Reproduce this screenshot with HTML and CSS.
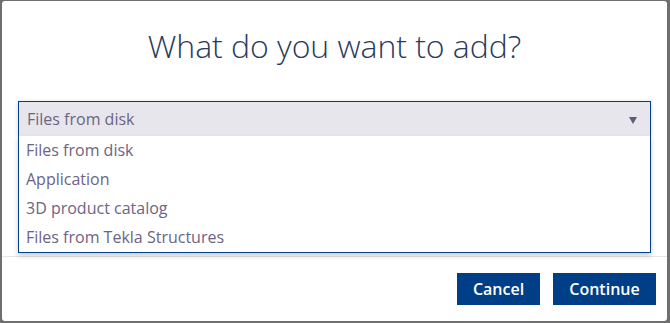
FILE: index.html
```html
<!DOCTYPE html>
<html>
<head>
<meta charset="utf-8">
<link rel="stylesheet" href="styles.css">
</head>
<body>
<div class="dialog">
  <div class="header">
    <h1 class="title">What do you want to add?</h1>
  </div>
  <div class="content">
    <div class="select">
      <div class="select-bar">
        <span class="select-value">Files from disk</span>
        <span class="arrow"></span>
      </div>
      <ul class="options">
        <li class="option">Files from disk</li>
        <li class="option">Application</li>
        <li class="option">3D product catalog</li>
        <li class="option">Files from Tekla Structures</li>
      </ul>
    </div>
  </div>
  <div class="footer">
    <button class="btn btn-cancel">Cancel</button>
    <button class="btn btn-continue">Continue</button>
  </div>
</div>
</body>
</html>
```

FILE: styles.css
```css
html, body {
  margin: 0;
  padding: 0;
}
body {
  background: #6f6f6f;
  font-family: "Open Sans", "Liberation Sans", sans-serif;
  width: 670px;
  height: 323px;
  overflow: hidden;
}
.dialog {
  margin: 1px 3px 0 2px;
  width: 665px;
  height: 320px;
  background: #ffffff;
  border-radius: 3px;
  display: flex;
  flex-direction: column;
}
.header {
  height: 100px;
  display: flex;
  justify-content: center;
}
.title {
  margin: 23px 0 0;
  font-size: 32px;
  font-weight: 300;
  line-height: 44px;
  color: #2b3a5b;
  letter-spacing: -0.05px;
}
.content {
  flex: 1;
  padding: 0 16px;
}
.select {
  position: relative;
}
.select-bar {
  height: 34px;
  border: 1px solid #003f87;
  border-bottom: none;
  background: #e7e6ec;
  display: flex;
  align-items: center;
  justify-content: space-between;
  padding: 0 13px 0 8px;
  box-shadow: 0 1px 4px rgba(0, 0, 0, 0.18);
}
.select-value {
  font-size: 16px;
  color: #6d6483;
}
.arrow {
  width: 0;
  height: 0;
  border-left: 4px solid transparent;
  border-right: 4px solid transparent;
  border-top: 7px solid #5f5b7a;
  margin-top: 2px;
}
.options {
  position: absolute;
  left: 0;
  right: 0;
  top: 100%;
  margin: 0;
  padding: 0;
  list-style: none;
  background: #ffffff;
  border: 1px solid #003f87;
  border-top: none;
  box-shadow: 0 3px 5px rgba(0, 0, 0, 0.2);
  z-index: 2;
}
.option {
  height: 29px;
  line-height: 29px;
  padding-left: 7px;
  font-size: 16px;
  color: #6d6483;
}
.footer {
  border-top: 1px solid #e6e6e6;
  display: flex;
  justify-content: flex-end;
  align-items: flex-start;
  gap: 13px;
  padding: 16px 11px 0 0;
  box-sizing: border-box;
  height: 65px;
}
.btn {
  height: 32px;
  padding: 0;
  border: none;
  background: #003f87;
  color: #ffffff;
  font-family: "Open Sans", "Liberation Sans", sans-serif;
  font-size: 16px;
  font-weight: 600;
  cursor: pointer;
}
.btn-cancel {
  width: 83px;
}
.btn-continue {
  width: 103px;
}
```
